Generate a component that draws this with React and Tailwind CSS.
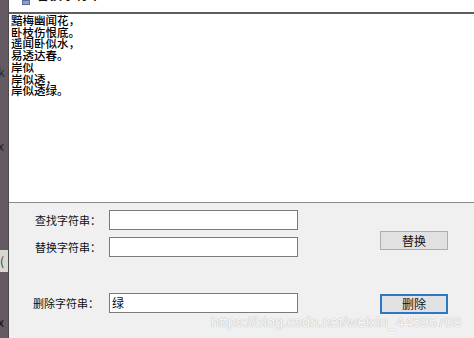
export default function App() {
  const cjk = { fontFamily: '"Noto Sans CJK SC", "Noto Sans", sans-serif' };
  const lines = ["黯梅幽闻花，", "卧枝伤恨底。", "遥闻卧似水，", "易透达春。", "岸似", "岸似透，", "岸似透绿。"];
  return (
    <div className="w-[474px] h-[338px] flex overflow-hidden relative bg-[#f0f0f0]" style={cjk}>
      <div className="w-[8px] h-full bg-[#665a62] flex flex-col text-[12px] leading-none text-[#1d2a3a] overflow-hidden">
        <div className="h-[66px]" />
        <div className="-ml-[2px]">k</div>
        <div className="h-[62px]" />
        <div className="-ml-[2px] text-[#2a2226]">x</div>
        <div className="h-[98px]" />
        <div className="h-[22px] bg-[#d9d8cf] flex items-center text-[#333]">(</div>
        <div className="h-[44px]" />
        <div className="-ml-[2px] text-[#111]">x</div>
      </div>
      <div className="flex-1 flex flex-col border-l border-[#4a4a4a]">
        <div className="h-[12px] bg-white flex items-start overflow-hidden">
          <div className="ml-[13px] mt-0 w-[8px] h-[5px] bg-[#8aa0c8] border border-[#5a6f99]" />
          <div className="ml-[7px] -mt-[12px] text-[12px] leading-[14px] text-[#111] font-bold tracking-[1px]">替换字符串</div>
        </div>
        <div className="h-[2px] bg-[#5e5e5e]" />
        <div className="h-[188px] bg-white pl-[2px] pt-[1px] text-[11.5px] leading-[11.7px] text-black font-medium">
          {lines.map((l, i) => (
            <div key={i}>{l}</div>
          ))}
        </div>
        <div className="h-[1px] bg-[#8a8a8a]" />
        <div className="flex-1 bg-[#f0f0f0] flex pt-[7px]">
          <div className="flex flex-col">
            <div className="flex items-center h-[20px]">
              <div className="w-[100px] pl-[26px] text-[11px] text-[#111]">查找字符串：</div>
              <div className="w-[189px] h-[20px] bg-white border border-[#7a7a7a]" />
            </div>
            <div className="flex items-center h-[20px] mt-[7px]">
              <div className="w-[100px] pl-[26px] text-[11px] text-[#111]">替换字符串：</div>
              <div className="w-[189px] h-[20px] bg-white border border-[#7a7a7a]" />
            </div>
            <div className="flex items-center h-[20px] mt-[36px]">
              <div className="w-[100px] pl-[24px] text-[11px] text-[#111]">删除字符串：</div>
              <div className="w-[189px] h-[20px] bg-white border border-[#7a7a7a] pl-[2px] text-[12px] leading-[18px] text-[#111]">绿</div>
            </div>
          </div>
          <div className="flex flex-col ml-[82px]">
            <div className="mt-[21px] w-[68px] h-[19px] bg-[#e1e1e1] border border-[#adadad] flex items-center justify-center text-[12px] text-[#111]">替换</div>
            <div className="mt-[44px] w-[68px] h-[20px] bg-[#e1e1e1] border-2 border-[#2c77c6] flex items-center justify-center text-[12px] text-[#111]">删除</div>
          </div>
        </div>
      </div>
      <div
        className="absolute left-[211px] top-[313px] text-[14.5px] leading-[18px] text-white/90 tracking-[0.1px]"
        style={{ fontFamily: '"Liberation Sans", Arial, sans-serif', textShadow: "0 0 1px #b8b8b8, 0 0 1px #b8b8b8" }}
      >
        https://blog.csdn.net/weixin_44595709
      </div>
    </div>
  );
}
